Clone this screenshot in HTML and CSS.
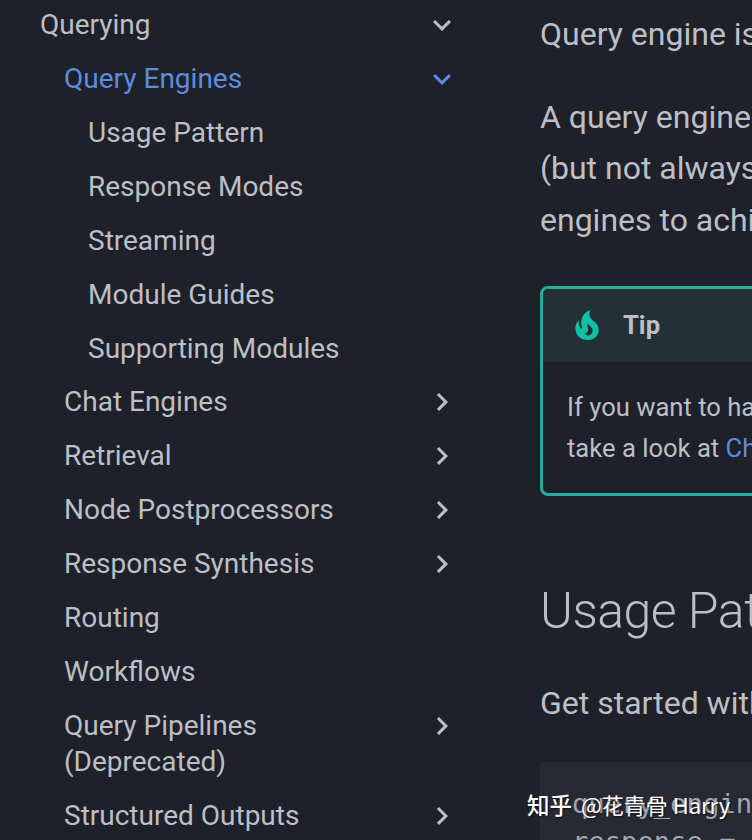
FILE: index.html
```html
<!DOCTYPE html>
<html lang="en">
<head>
    <meta charset="UTF-8">
    <meta name="viewport" content="width=device-width, initial-scale=1.0">
    <title>Query Engines</title>
    <link rel="stylesheet" href="styles.css">
</head>
<body>
    <svg class="sprite">
        <symbol id="chevron" viewBox="0 0 24 24">
            <path d="M8.59 16.58 13.17 12 8.59 7.41 10 6l6 6-6 6z"/>
        </symbol>
    </svg>

    <div class="layout">
        <nav class="sidebar">
            <ul class="nav-list">
                <li class="nav-item">Querying <svg class="arrow open"><use href="#chevron"/></svg></li>
                <li class="nav-item level-2 active">Query Engines <svg class="arrow open"><use href="#chevron"/></svg></li>
                <li class="nav-item level-3">Usage Pattern</li>
                <li class="nav-item level-3">Response Modes</li>
                <li class="nav-item level-3">Streaming</li>
                <li class="nav-item level-3">Module Guides</li>
                <li class="nav-item level-3">Supporting Modules</li>
                <li class="nav-item level-2">Chat Engines <svg class="arrow"><use href="#chevron"/></svg></li>
                <li class="nav-item level-2">Retrieval <svg class="arrow"><use href="#chevron"/></svg></li>
                <li class="nav-item level-2">Node Postprocessors <svg class="arrow"><use href="#chevron"/></svg></li>
                <li class="nav-item level-2">Response Synthesis <svg class="arrow"><use href="#chevron"/></svg></li>
                <li class="nav-item level-2">Routing</li>
                <li class="nav-item level-2">Workflows</li>
                <li class="nav-item level-2">Query Pipelines<br>(Deprecated) <svg class="arrow"><use href="#chevron"/></svg></li>
                <li class="nav-item level-2">Structured Outputs <svg class="arrow"><use href="#chevron"/></svg></li>
            </ul>
        </nav>

        <main class="content">
            <p>Query engine is</p>
            <p>A query engine<br>(but not always<br>engines to achi</p>

            <div class="tip">
                <div class="tip-title">
                    <svg class="tip-icon" viewBox="0 0 24 24"><path d="M17.66 11.2c-.23-.3-.51-.56-.77-.82-.67-.6-1.43-1.03-2.07-1.66C13.33 7.26 13 4.85 13.95 3c-.95.23-1.78.75-2.49 1.32-2.59 2.08-3.61 5.75-2.39 8.9.04.1.08.2.08.33 0 .22-.15.42-.35.5-.23.1-.47.04-.66-.12a.58.58 0 0 1-.14-.17c-1.13-1.43-1.31-3.48-.55-5.12C5.78 10 4.87 12.3 5 14.47c.06.5.12 1 .29 1.5.14.6.41 1.2.71 1.73 1.08 1.73 2.95 2.97 4.96 3.22 2.14.27 4.43-.12 6.07-1.6 1.83-1.66 2.47-4.32 1.53-6.6l-.13-.26c-.21-.46-.77-1.26-.77-1.26m-3.16 6.3c-.28.24-.74.5-1.1.6-1.12.4-2.24-.16-2.9-.82 1.19-.28 1.9-1.16 2.11-2.05.17-.8-.15-1.46-.28-2.23-.12-.74-.1-1.37.17-2.06.19.38.39.76.63 1.06.77 1 1.98 1.44 2.24 2.8.04.14.06.28.06.43.03.82-.33 1.72-.93 2.27"/></svg>
                    Tip
                </div>
                <p>If you want to ha<br>take a look at <a>Ch</a></p>
            </div>

            <h2>Usage Pat</h2>
            <p>Get started with</p>
            <pre>query_engin
response =</pre>
        </main>
    </div>

    <div class="watermark"><b>知乎</b> @花青骨 Harry</div>
</body>
</html>
```
FILE: styles.css
```css
body {
    margin: 0;
    height: 840px;
    overflow: hidden;
    position: relative;
    background-color: #1e2129;
    color: #bdbfc6;
    font-family: Roboto, sans-serif;
}

.sprite {
    display: none;
}

.layout {
    display: flex;
    height: 840px;
    overflow: hidden;
}

/* --- Sidebar --- */
.sidebar {
    flex: none;
    width: 460px;
    margin-right: 80px;
}

.nav-list {
    display: flex;
    flex-direction: column;
    gap: 17.5px;
    margin: 0;
    padding: 7.2px 0 0 40px;
    list-style: none;
    font-size: 28px;
    line-height: 1.3;
}

.nav-item {
    display: flex;
    justify-content: space-between;
}

.level-2 {
    padding-left: 24px;
}

.level-3 {
    padding-left: 48px;
}

.active {
    color: #5e8bde;
}

.arrow {
    width: 36px;
    height: 36px;
    fill: currentColor;
}

.arrow.open {
    transform: rotate(90deg);
}

/* --- Content --- */
.content {
    flex: none;
    width: 400px;
    padding-top: 9.1px;
    font-size: 32px;
    line-height: 1.6;
    white-space: nowrap;
}

.content p {
    margin: 0 0 32px;
}

.content h2 {
    margin: 80px 0 32px;
    font-size: 50px;
    font-weight: 300;
    line-height: 1.4;
    letter-spacing: -0.5px;
}

.tip {
    margin-top: 40px;
    border: 3px solid #24ad98;
    border-radius: 8px;
    font-size: 25.6px;
    overflow: hidden;
}

.tip-title {
    display: flex;
    align-items: center;
    gap: 16px;
    height: 41px;
    padding: 16px 24px;
    background-color: #233036;
    font-weight: 700;
}

.tip-icon {
    width: 40px;
    height: 40px;
    fill: #0cc1a6;
}

.tip p {
    margin: 25.6px 24px 24px;
}

.tip a {
    color: #5e8bde;
}

.content pre {
    margin: 32.5px 0 0;
    padding: 22.5px 32px;
    border-radius: 4px;
    background-color: #272a35;
    color: #a3a5b0;
    font-family: "DejaVu Sans Mono", monospace;
    font-size: 27.2px;
    line-height: 1.4;
}

.watermark {
    position: absolute;
    left: 527px;
    top: 787px;
    color: #fff;
    font-family: "Noto Sans CJK SC", sans-serif;
    font-size: 22px;
    line-height: 34px;
    white-space: nowrap;
    text-shadow: 1px 1px 2px rgba(0, 0, 0, 0.6);
}

.watermark b {
    margin-right: 4px;
    font-size: 22.5px;
    font-weight: 500;
}
```
